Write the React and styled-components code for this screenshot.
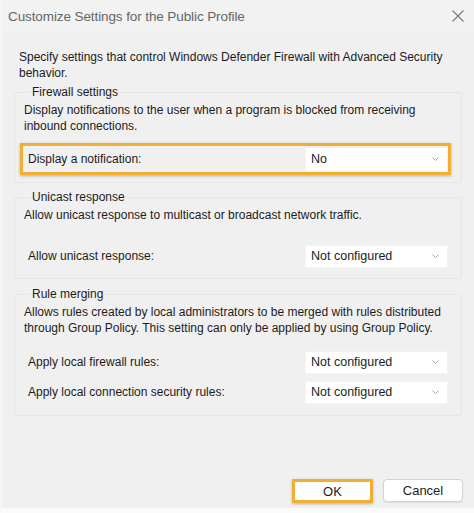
import React from 'react';
import styled, { createGlobalStyle } from 'styled-components';

const GlobalStyle = createGlobalStyle`
  html, body {
    margin: 0;
    padding: 0;
    background: #f0f0f0;
  }
  body {
    font-family: "Liberation Sans", Arial, sans-serif;
    font-size: 12px;
    color: #1c1c1c;
  }
`;

const Window = styled.div`
  width: 474px;
  height: 513px;
  box-sizing: border-box;
  display: flex;
  flex-direction: column;
  background: #f0f0f0;
  border-left: 2px solid #f7f7f7;
  border-bottom: 5px solid #fafafa;
`;

const TitleBar = styled.div`
  height: 32px;
  display: flex;
  align-items: center;
  justify-content: space-between;
  padding: 0 10px 0 6px;
  background: #f2f2f2;
`;

const Title = styled.div`
  font-size: 13.5px;
  color: #666;
  letter-spacing: -0.1px;
`;

const CloseIcon = () => (
  <svg width="12" height="12" viewBox="0 0 12 12">
    <path d="M0.5 0.5 L11.5 11.5 M11.5 0.5 L0.5 11.5" stroke="#7a7a7a" strokeWidth="1.1" fill="none" />
  </svg>
);

const Body = styled.div`
  flex: 1;
  display: flex;
  flex-direction: column;
  padding: 17px 12px 0 12px;
`;

const Intro = styled.p`
  margin: 0 0 3px 5px;
  line-height: 16px;
`;

const Group = styled.fieldset`
  margin: ${(p) => p.$top || 0}px 0 0 0;
  padding: 2px 10px ${(p) => p.$bottom || 8}px 9px;
  border: 1px solid #e6e6e6;
  border-radius: 2px;
  min-width: 0;
`;

const Legend = styled.legend`
  padding: 0 2px;
  margin-left: 6px;
  line-height: 16px;
`;

const Desc = styled.p`
  margin: 0 0 ${(p) => p.$gap || 0}px 0;
  line-height: 16px;
`;

const Row = styled.div`
  display: flex;
  align-items: center;
  justify-content: space-between;
  height: ${(p) => (p.$highlight ? 26 : 24)}px;
  margin: 0 0 0 -4px;
  padding: 0 0 0 5px;
  border: 3px solid ${(p) => (p.$highlight ? '#f0ae32' : 'transparent')};
  box-shadow: ${(p) => (p.$highlight ? '0 1px 3px rgba(0,0,0,0.25)' : 'none')};
`;

const Label = styled.span`
  line-height: 16px;
`;

const Select = styled.div`
  width: 143px;
  height: ${(p) => (p.$tall ? 25 : 23)}px;
  box-sizing: border-box;
  display: flex;
  align-items: center;
  justify-content: space-between;
  padding: 0 8px 0 5px;
  background: #fff;
  border: 1px solid #f4f4f4;
  font-size: 12.5px;
`;

const Chevron = () => (
  <svg width="7" height="4" viewBox="0 0 7 4">
    <path d="M0.5 0.5 L3.5 3.5 L6.5 0.5" stroke="#a0a0a0" strokeWidth="0.9" fill="none" />
  </svg>
);

const Footer = styled.div`
  display: flex;
  justify-content: flex-end;
  gap: 10px;
  padding: 0 11px 5px 0;
`;

const Button = styled.button`
  width: ${(p) => (p.$primary ? 81 : 80)}px;
  height: ${(p) => (p.$primary ? 24 : 23)}px;
  box-sizing: border-box;
  background: #fff;
  font-family: "Liberation Sans", Arial, sans-serif;
  font-size: 13px;
  color: #1c1c1c;
  border: ${(p) => (p.$primary ? '3px solid #f0ae32' : '1px solid #d3d3d3')};
  border-radius: ${(p) => (p.$primary ? 1 : 4)}px;
  box-shadow: ${(p) => (p.$primary ? '0 1px 3px rgba(0,0,0,0.25)' : '0 1px 1px rgba(0,0,0,0.08)')};
  padding: 0;
`;

const SettingRow = ({ label, value, highlight }) => (
  <Row $highlight={highlight}>
    <Label>{label}</Label>
    <Select $tall={highlight}>
      <span>{value}</span>
      <Chevron />
    </Select>
  </Row>
);

const App = () => (
  <>
    <GlobalStyle />
    <Window>
      <TitleBar>
        <Title>Customize Settings for the Public Profile</Title>
        <CloseIcon />
      </TitleBar>
      <Body>
        <Intro>
          Specify settings that control Windows Defender Firewall with Advanced Security
          <br />
          behavior.
        </Intro>
        <Group $bottom={7}>
          <Legend>Firewall settings</Legend>
          <Desc $gap={9}>
            Display notifications to the user when a program is blocked from receiving
            <br />
            inbound connections.
          </Desc>
          <SettingRow label="Display a notification:" value="No" highlight />
        </Group>
        <Group $top={6} $bottom={7}>
          <Legend>Unicast response</Legend>
          <Desc $gap={18}>Allow unicast response to multicast or broadcast network traffic.</Desc>
          <SettingRow label="Allow unicast response:" value="Not configured" />
        </Group>
        <Group $top={7} $bottom={8}>
          <Legend>Rule merging</Legend>
          <Desc $gap={11}>
            Allows rules created by local administrators to be merged with rules distributed
            <br />
            through Group Policy. This setting can only be applied by using Group Policy.
          </Desc>
          <SettingRow label="Apply local firewall rules:" value="Not configured" />
          <SettingRow label="Apply local connection security rules:" value="Not configured" />
        </Group>
      </Body>
      <Footer>
        <Button $primary>OK</Button>
        <Button>Cancel</Button>
      </Footer>
    </Window>
  </>
);

export default App;
